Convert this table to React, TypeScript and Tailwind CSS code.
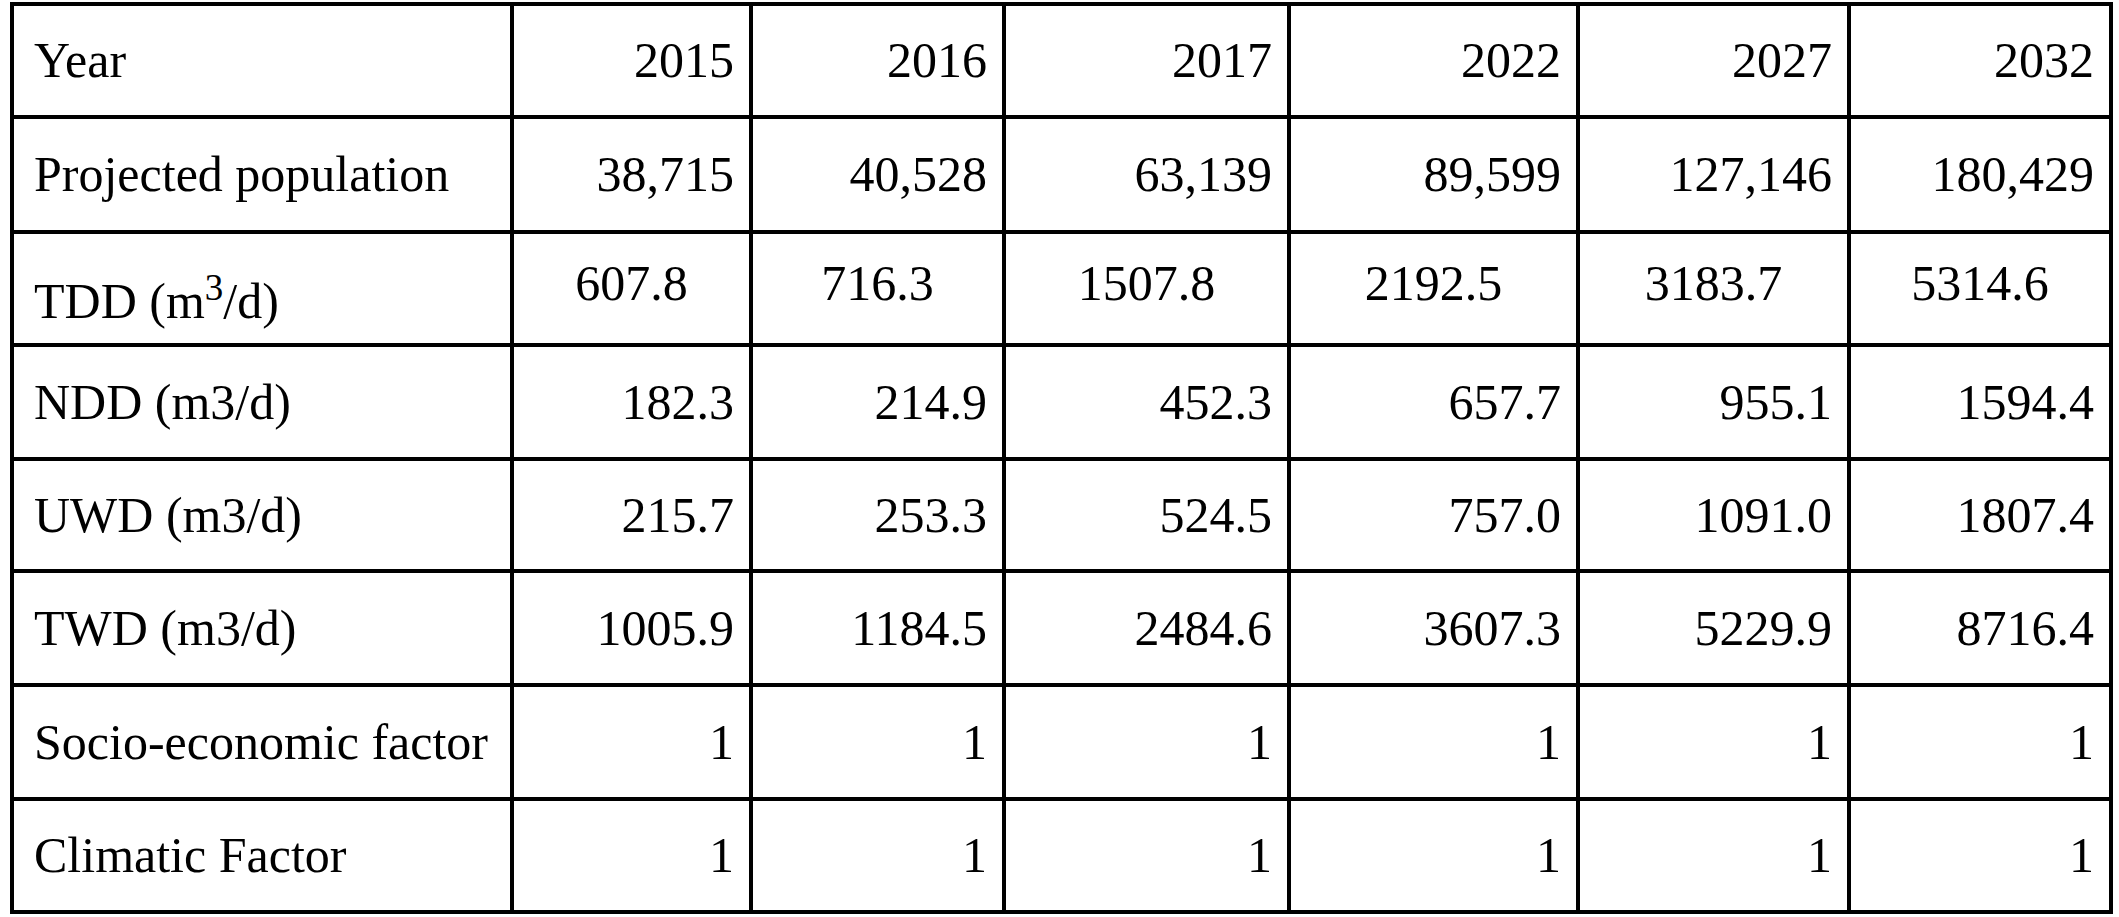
import React from "react";

const years = ["2015", "2016", "2017", "2022", "2027", "2032"];

interface Row {
  label: React.ReactNode;
  values: string[];
  centered?: boolean;
}

const rows: Row[] = [
  { label: "Projected population", values: ["38,715", "40,528", "63,139", "89,599", "127,146", "180,429"] },
  {
    label: (
      <>
        TDD (m<sup className="text-[37px]">3</sup>/d)
      </>
    ),
    values: ["607.8", "716.3", "1507.8", "2192.5", "3183.7", "5314.6"],
    centered: true,
  },
  { label: "NDD (m3/d)", values: ["182.3", "214.9", "452.3", "657.7", "955.1", "1594.4"] },
  { label: "UWD (m3/d)", values: ["215.7", "253.3", "524.5", "757.0", "1091.0", "1807.4"] },
  { label: "TWD (m3/d)", values: ["1005.9", "1184.5", "2484.6", "3607.3", "5229.9", "8716.4"] },
  { label: "Socio-economic factor", values: ["1", "1", "1", "1", "1", "1"] },
  { label: "Climatic Factor", values: ["1", "1", "1", "1", "1", "1"] },
];

const cell = "border-r-4 border-b-4 border-black flex";

const App = () => {
  return (
    <div className="w-[2119px] h-[917px] bg-white text-black font-[family-name:Liberation_Serif,Times_New_Roman,serif] text-[50px] leading-normal">
      <div className="ml-[10px] pt-[2px]">
        <div
          className="grid w-max border-l-4 border-t-4 border-black
            grid-cols-[500px_239px_253px_285px_289px_271px_262px]
            grid-rows-[113px_115px_113px_114px_112px_114px_114px_113px]"
        >
          <div className={`${cell} items-center pl-[20px]`}>Year</div>
          {years.map((y) => (
            <div key={y} className={`${cell} items-center justify-end pr-[15px]`}>
              {y}
            </div>
          ))}

          {rows.map((row, i) => (
            <React.Fragment key={i}>
              {row.centered ? (
                <div className={`${cell} items-start pl-[20px] pt-[30px]`}>
                  <span>{row.label}</span>
                </div>
              ) : (
                <div className={`${cell} items-center pl-[20px] whitespace-nowrap`}>{row.label}</div>
              )}
              {row.values.map((v, j) =>
                row.centered ? (
                  <div key={j} className={`${cell} items-start justify-center pt-[12px]`}>
                    {v}
                  </div>
                ) : (
                  <div key={j} className={`${cell} items-center justify-end pr-[15px]`}>
                    {v}
                  </div>
                )
              )}
            </React.Fragment>
          ))}
        </div>
      </div>
    </div>
  );
};

export default App;
